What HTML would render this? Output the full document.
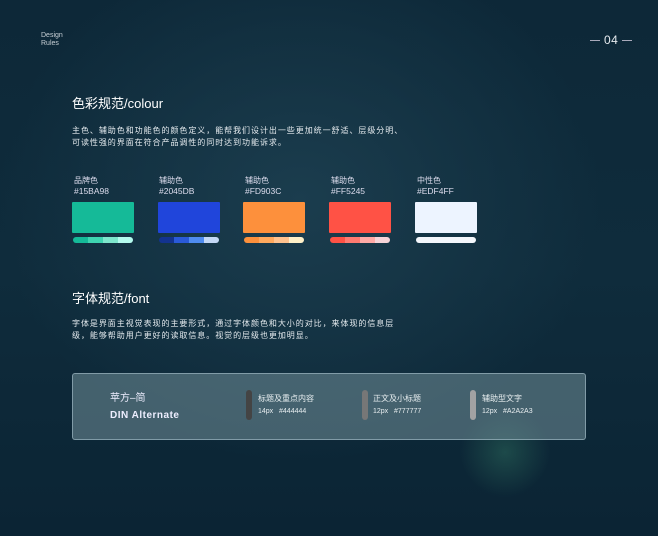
<!DOCTYPE html>
<html><head><meta charset="utf-8"><style>
*{margin:0;padding:0;box-sizing:border-box}
body{width:658px;height:536px;overflow:hidden;position:relative;font-family:"Liberation Sans","Noto Sans CJK SC",sans-serif;color:#fff;
background:radial-gradient(ellipse 300px 260px at 300px 200px,#1b3d4e 0%,rgba(20,52,68,0) 100%),radial-gradient(circle 45px at 505px 452px,rgba(60,140,110,.35),rgba(0,0,0,0)),linear-gradient(180deg,#0d2838 0%,#0f2c3c 50%,#0b2434 100%);}
.a{position:absolute}
.sw{position:absolute;width:62px;height:31px;top:202px;border-radius:1px}
.bar{position:absolute;top:237px;width:60px;height:6px;border-radius:3px;overflow:hidden;display:flex}
.bar i{flex:1}
.lab{position:absolute;top:175px;font-size:8px;color:#dde;line-height:11px}
.lab b{font-weight:normal;font-size:8.5px;display:block}
.fi{position:absolute;top:390px;width:6px;height:30px;border-radius:3px}
.ft{position:absolute;font-size:8px;color:#e8eef0}
</style></head><body>
<div class="a" style="left:41px;top:32px;font-size:7px;line-height:8px;color:#c8d0d6">Design<br>Rules</div>
<div class="a" style="left:590px;top:33px;font-size:12px;color:#e6eaee;letter-spacing:.5px"><span style="display:inline-block;width:10px;height:1px;background:#aab;vertical-align:middle;margin-right:4px"></span>04<span style="display:inline-block;width:10px;height:1px;background:#aab;vertical-align:middle;margin-left:4px"></span></div>
<div class="a" style="left:72px;top:93px;font-size:13px">色彩规范/colour</div>
<div class="a" style="left:72px;top:125px;font-size:8px;line-height:12px;color:#e4eaee;letter-spacing:.95px">主色、辅助色和功能色的颜色定义，能帮我们设计出一些更加统一舒适、层级分明、<br>可读性强的界面在符合产品调性的同时达到功能诉求。</div>

<div class="lab" style="left:74px">品牌色<b>#15BA98</b></div>
<div class="lab" style="left:159px">辅助色<b>#2045DB</b></div>
<div class="lab" style="left:245px">辅助色<b>#FD903C</b></div>
<div class="lab" style="left:331px">辅助色<b>#FF5245</b></div>
<div class="lab" style="left:417px">中性色<b>#EDF4FF</b></div>

<div class="sw" style="left:72px;background:#15ba98"></div>
<div class="sw" style="left:158px;background:#2045db"></div>
<div class="sw" style="left:243px;background:#fd903c"></div>
<div class="sw" style="left:329px;background:#ff5245"></div>
<div class="sw" style="left:415px;background:#edf4ff"></div>

<div class="bar" style="left:73px"><i style="background:#15ba98"></i><i style="background:#3fd4b0"></i><i style="background:#7ee6cc"></i><i style="background:#b4fbee"></i></div>
<div class="bar" style="left:159px"><i style="background:#13338f"></i><i style="background:#2a5ad8"></i><i style="background:#4f8cf0"></i><i style="background:#c4d8f6"></i></div>
<div class="bar" style="left:244px"><i style="background:#fd903c"></i><i style="background:#ffa95e"></i><i style="background:#ffc28e"></i><i style="background:#fff0c8"></i></div>
<div class="bar" style="left:330px"><i style="background:#ff5245"></i><i style="background:#ff7a70"></i><i style="background:#ffaaa6"></i><i style="background:#f6d4d8"></i></div>
<div class="bar" style="left:416px;background:#f4f7fc"></div>

<div class="a" style="left:72px;top:288px;font-size:13px">字体规范/font</div>
<div class="a" style="left:72px;top:318px;font-size:8px;line-height:12px;color:#e4eaee;letter-spacing:.95px">字体是界面主视觉表现的主要形式，通过字体颜色和大小的对比，来体现的信息层<br>级，能够帮助用户更好的读取信息。视觉的层级也更加明显。</div>

<div class="a" style="left:72px;top:373px;width:514px;height:67px;background:rgba(105,135,145,.6);border:1px solid rgba(170,195,205,.6);border-radius:3px"></div>
<div class="a" style="left:110px;top:389px;font-size:10px;color:#eef">苹方–简</div>
<div class="a" style="left:110px;top:410px;font-size:10px;font-weight:bold;letter-spacing:.5px;color:#eef">DIN Alternate</div>
<div class="fi" style="left:246px;background:#444"></div>
<div class="fi" style="left:362px;background:#777"></div>
<div class="fi" style="left:470px;background:#a2a2a3"></div>
<div class="ft" style="left:258px;top:393px">标题及重点内容</div>
<div class="ft" style="left:258px;top:408px;font-size:7px">14px&nbsp;&nbsp;&nbsp;#444444</div>
<div class="ft" style="left:373px;top:393px">正文及小标题</div>
<div class="ft" style="left:373px;top:408px;font-size:7px">12px&nbsp;&nbsp;&nbsp;#777777</div>
<div class="ft" style="left:482px;top:393px">辅助型文字</div>
<div class="ft" style="left:482px;top:408px;font-size:7px">12px&nbsp;&nbsp;&nbsp;#A2A2A3</div>
</body></html>
